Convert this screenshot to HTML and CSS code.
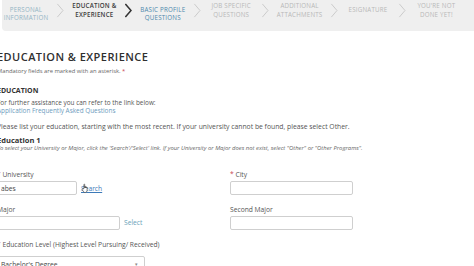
FILE: index.html
```html
<!DOCTYPE html>
<html lang="en">
<head>
  <meta charset="UTF-8" />
  <title>Education &amp; Experience</title>
  <link rel="stylesheet" href="styles.css">
</head>
<body>

  <!-- Progress steps -->
  <nav class="steps">
    <div class="steps-track">
      <div class="step step-done step-low">Personal<br>Information</div>
      <svg class="chevron" viewBox="0 0 8 16"><polyline points="1,1 7,8 1,15" /></svg>
      <div class="step step-current">Education &amp;<br>Experience</div>
      <svg class="chevron chevron-current" viewBox="0 0 8 16"><polyline points="1,1 7,8 1,15" /></svg>
      <div class="step step-next step-low">Basic Profile<br>Questions</div>
      <svg class="chevron" viewBox="0 0 8 16"><polyline points="1,1 7,8 1,15" /></svg>
      <div class="step">Job Specific<br>Questions</div>
      <svg class="chevron" viewBox="0 0 8 16"><polyline points="1,1 7,8 1,15" /></svg>
      <div class="step">Additional<br>Attachments</div>
      <svg class="chevron" viewBox="0 0 8 16"><polyline points="1,1 7,8 1,15" /></svg>
      <div class="step step-single">eSignature</div>
      <svg class="chevron" viewBox="0 0 8 16"><polyline points="1,1 7,8 1,15" /></svg>
      <div class="step">You're not<br>done yet!</div>
    </div>
  </nav>

  <main class="content">
    <h1 class="page-title">Education &amp; Experience</h1>
    <p class="note">Mandatory fields are marked with an asterisk. <span class="req">*</span></p>

    <h2 class="section-title">Education</h2>
    <p class="help">
      For further assistance you can refer to the link below:<br>
      <a class="faq-link" href="#">Application Frequently Asked Questions</a>
    </p>
    <p class="intro">Please list your education, starting with the most recent. If your university cannot be found, please select Other.</p>

    <h3 class="sub-title">Education 1</h3>
    <p class="hint">To select your University or Major, click the 'Search'/'Select' link. If your University or Major does not exist, select "Other" or "Other Programs".</p>

    <div class="form-grid">
      <div class="field">
        <label><span class="req">*</span> University</label>
        <div class="control-row">
          <input class="input input-short" type="text" value="abes">
          <span class="link-wrap">
            <a class="search-link" href="#">Search</a>
            <svg class="cursor" viewBox="0 0 10 12">
              <path d="M3.2 6.2V1.6c0-.6.9-.6.9 0v3.6-1c0-.6.9-.6.9 0v1-.7c0-.6.9-.6.9 0v.9-.5c0-.6.9-.6.9 0v3c0 1.4-.9 2.600-2.3 2.6H4.4c-.7 0-1.2-.4-1.6-.9L1.2 7.1c-.3-.5.3-1 .8-.6z" />
            </svg>
          </span>
        </div>
      </div>
      <div class="field">
        <label><span class="req">*</span> City</label>
        <input class="input input-right" type="text">
      </div>

      <div class="field">
        <label>Major</label>
        <div class="control-row">
          <input class="input input-mid" type="text">
          <a class="select-link" href="#">Select</a>
        </div>
      </div>
      <div class="field">
        <label>Second Major</label>
        <input class="input input-right" type="text">
      </div>

      <div class="field field-wide">
        <label><span class="req">*</span> Education Level (Highest Level Pursuing/ Received)</label>
        <div class="select-box">
          <span>Bachelor's Degree</span>
          <span class="arrow">&#9662;</span>
        </div>
      </div>
    </div>
  </main>

</body>
</html>
```

FILE: styles.css
```css
* { margin: 0; padding: 0; box-sizing: border-box; }
body {
  font-family: 'Open Sans', 'Liberation Sans', sans-serif;
  background: #fff;
  color: #666;
  overflow: hidden;
}

/* steps bar */
.steps {
  margin-left: 2px;
  height: 31px;
  background: #efefef;
  border-bottom-left-radius: 4px;
  overflow: hidden;
}
.steps-track {
  display: flex;
  align-items: flex-start;
  margin-left: -4px;
}
.step {
  flex: 0 0 56px;
  padding-top: 2px;
  font-size: 6.2px;
  line-height: 8.5px;
  text-transform: uppercase;
  letter-spacing: 0.2px;
  text-align: center;
  color: #b8b8b8;
}
.step-low { padding-top: 5.5px; }
.step-single { padding-top: 6.3px; }
.step-done { color: #93b4c4; }
.step-current { color: #3c3c3c; font-weight: 600; }
.step-next { color: #4d88ad; }
.chevron {
  flex: 0 0 12.4px;
  height: 15px;
  margin-top: 3px;
  padding: 0 2.4px;
  fill: none;
  stroke: #c9c9c9;
  stroke-width: 1;
}
.chevron-current { stroke: #333; stroke-width: 1.6; }

/* content */
.content { margin-left: -3px; }
.page-title {
  margin-top: 19px;
  font-size: 11px;
  line-height: 14px;
  font-weight: 600;
  letter-spacing: 0.45px;
  text-transform: uppercase;
  color: #2f2f2f;
}
.note {
  margin-top: 3px;
  font-size: 5.8px;
  line-height: 9px;
}
.req { color: #c8454f; }
.section-title {
  margin-top: 9.5px;
  font-size: 7px;
  line-height: 9px;
  font-weight: 700;
  text-transform: uppercase;
  color: #333;
}
.help {
  margin-top: 4.3px;
  font-size: 6.4px;
  line-height: 8px;
  color: #555;
}
.faq-link { color: #6c9bbd; text-decoration: none; }
.intro {
  margin-top: 8px;
  font-size: 6.8px;
  line-height: 8px;
  color: #555;
}
.sub-title {
  margin-top: 5px;
  font-size: 7.5px;
  line-height: 9px;
  font-weight: 700;
  color: #333;
}
.hint {
  margin-top: 0.6px;
  font-size: 5.9px;
  line-height: 7px;
  font-style: italic;
  color: #666;
}

/* form */
.form-grid {
  margin-top: 19px;
  display: grid;
  grid-template-columns: 233px 124px;
  row-gap: 11px;
}
.field label {
  display: block;
  font-size: 6.7px;
  line-height: 8px;
  margin-bottom: 2px;
  color: #555;
}
.field-wide { grid-column: 1 / -1; }
.field-wide label { margin-bottom: 7px; }
.control-row { display: flex; align-items: center; gap: 4px; }
.input {
  display: block;
  height: 14px;
  border: 1px solid #cfcfcf;
  border-radius: 2px;
  background: #fff;
  font-family: inherit;
  font-size: 6.7px;
  padding: 0 3px;
  color: #444;
}
.input-short { width: 80px; }
.input-mid { width: 123px; }
.input-right { width: 123px; }
.link-wrap {
  position: relative;
  display: block;
  font-size: 6.7px;
  line-height: 8px;
  padding-top: 2px;
}
.search-link {
  color: #3d7ab8;
  text-decoration: underline;
}
.cursor {
  position: absolute;
  left: 0;
  top: 0;
  width: 9px;
  height: 11px;
  fill: #fff;
  stroke: #333;
  stroke-width: 0.7;
}
.select-link {
  font-size: 6.7px;
  line-height: 8px;
  color: #6aa2b9;
  text-decoration: none;
}
.select-box {
  width: 148px;
  height: 16px;
  border: 1px solid #cfcfcf;
  border-radius: 2px;
  display: flex;
  justify-content: space-between;
  align-items: center;
  padding: 0 6px 0 3px;
  font-size: 6.7px;
  color: #444;
}
.arrow { font-size: 5px; color: #888; }
```
